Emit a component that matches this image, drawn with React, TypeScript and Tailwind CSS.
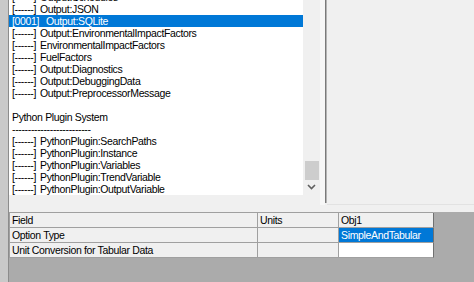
const font = { fontFamily: '"Liberation Sans", Arial, sans-serif' }

const upper = [
  ['[------]', 'Output:Schedules'],
  ['[------]', 'Output:JSON'],
  ['[0001]', 'Output:SQLite'],
  ['[------]', 'Output:EnvironmentalImpactFactors'],
  ['[------]', 'EnvironmentalImpactFactors'],
  ['[------]', 'FuelFactors'],
  ['[------]', 'Output:Diagnostics'],
  ['[------]', 'Output:DebuggingData'],
  ['[------]', 'Output:PreprocessorMessage'],
]

const plugin = [
  'PythonPlugin:SearchPaths',
  'PythonPlugin:Instance',
  'PythonPlugin:Variables',
  'PythonPlugin:TrendVariable',
  'PythonPlugin:OutputVariable',
]

function Item({ tag, name }: { tag: string; name: string }) {
  const sel = tag === '[0001]'
  return (
    <div className={`h-[12px] leading-[12px] flex pl-[3px] ${sel ? 'bg-[#0078d7] text-white' : ''}`}>
      <span className="w-[28px] whitespace-pre">{tag}</span>
      <span className={sel ? 'ml-[6px]' : ''}>{name}</span>
    </div>
  )
}

export default function App() {
  return (
    <div
      className="w-[474px] h-[282px] flex bg-[#f0f0f0] text-black text-[10.5px] tracking-[-0.35px] overflow-hidden"
      style={font}
    >
      {/* window edge */}
      <div className="w-[9px] bg-[#c9c9c9] border-r border-[#8c8c8c]" />

      <div className="flex-1 flex flex-col">
        {/* class list + right panel */}
        <div className="h-[212px] flex">
          <div className="w-[311px] flex flex-col">
            <div className="h-[195px] flex bg-white overflow-hidden">
              <div className="flex-1 overflow-hidden">
                <div className="mt-[-9px]">
                  {upper.map(([t, n], i) => (
                    <Item key={i} tag={t} name={n} />
                  ))}
                  <div className="h-[12px]" />
                  <div className="h-[12px] leading-[12px] pl-[3px]">Python Plugin System</div>
                  <div className="h-[12px] leading-[12px] pl-[3px]">-------------------------</div>
                  {plugin.map((n) => (
                    <Item key={n} tag="[------]" name={n} />
                  ))}
                </div>
              </div>
              {/* scrollbar */}
              <div className="w-[17px] bg-[#f0f0f0] flex flex-col items-center justify-end pb-[5px]">
                <div className="w-[14px] h-[19px] bg-[#cdcdcd] mb-[4px]" />
                <svg width="9" height="6" viewBox="0 0 9 6">
                  <path d="M1 1 L4.5 4.5 L8 1" fill="none" stroke="#606060" strokeWidth="1.6" />
                </svg>
              </div>
            </div>
            <div className="flex-1" />
          </div>
          <div className="w-[5px] bg-[#f7f7f7] h-[205px]" />
          <div className="w-[2px] h-[203px] bg-[#7a7a7a] border-r border-[#b4b4b4]" />
          <div className="flex-1 h-[205px] bg-[#f0f0f0] border-b border-[#e2e2e2]" />
        </div>

        {/* field grid */}
        <div className="flex-1 bg-[#ababab]">
          <div className="w-[424px] grid grid-cols-[248px_81px_95px] border-t border-l border-[#a0a0a0] bg-[#f0f0f0]">
            {[
              ['Field', 'Units', 'Obj1'],
              ['Option Type', '', 'SimpleAndTabular'],
              ['Unit Conversion for Tabular Data', '', ''],
            ].map((row, r) =>
              row.map((c, k) => {
                let bg = ''
                if (k === 2 && r === 1) bg = 'bg-[#0078d7] text-white'
                else if (k === 2 && r === 2) bg = 'bg-white'
                return (
                  <div
                    key={`${r}-${k}`}
                    className={`h-[15px] leading-[14px] px-[2px] border-r border-b border-[#a0a0a0] whitespace-nowrap ${bg} ${k === 2 ? 'border-r-[#707070]' : ''}`}
                  >
                    {c}
                  </div>
                )
              })
            )}
          </div>
        </div>
      </div>
    </div>
  )
}
